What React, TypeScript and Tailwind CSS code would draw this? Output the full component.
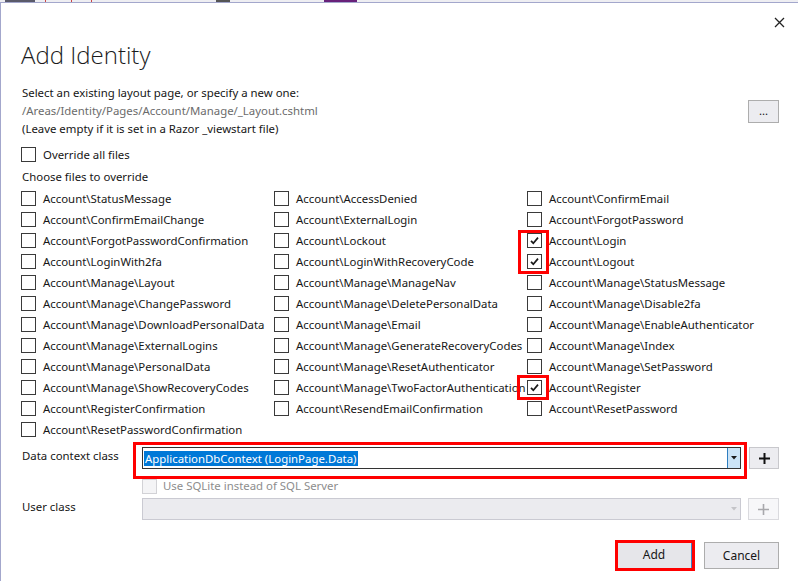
import React from "react";

const col1 = [
  "Account\\StatusMessage",
  "Account\\ConfirmEmailChange",
  "Account\\ForgotPasswordConfirmation",
  "Account\\LoginWith2fa",
  "Account\\Manage\\Layout",
  "Account\\Manage\\ChangePassword",
  "Account\\Manage\\DownloadPersonalData",
  "Account\\Manage\\ExternalLogins",
  "Account\\Manage\\PersonalData",
  "Account\\Manage\\ShowRecoveryCodes",
  "Account\\RegisterConfirmation",
  "Account\\ResetPasswordConfirmation",
];
const col2 = [
  "Account\\AccessDenied",
  "Account\\ExternalLogin",
  "Account\\Lockout",
  "Account\\LoginWithRecoveryCode",
  "Account\\Manage\\ManageNav",
  "Account\\Manage\\DeletePersonalData",
  "Account\\Manage\\Email",
  "Account\\Manage\\GenerateRecoveryCodes",
  "Account\\Manage\\ResetAuthenticator",
  "Account\\Manage\\TwoFactorAuthentication",
  "Account\\ResendEmailConfirmation",
];
const col3 = [
  "Account\\ConfirmEmail",
  "Account\\ForgotPassword",
  "Account\\Login",
  "Account\\Logout",
  "Account\\Manage\\StatusMessage",
  "Account\\Manage\\Disable2fa",
  "Account\\Manage\\EnableAuthenticator",
  "Account\\Manage\\Index",
  "Account\\Manage\\SetPassword",
  "Account\\Register",
  "Account\\ResetPassword",
];
const checked = new Set(["Account\\Login", "Account\\Logout", "Account\\Register"]);

function Box({ on, disabled }: { on?: boolean; disabled?: boolean }) {
  return (
    <div
      className={
        disabled
          ? "w-[15px] h-[15px] shrink-0 border border-[#d2d2d6] bg-[#f4f4f6]"
          : "w-[15px] h-[15px] shrink-0 border border-[#3a3a3a] bg-white flex items-center justify-center"
      }
    >
      {on && (
        <svg width="11" height="11" viewBox="0 0 11 11">
          <path d="M2 5.8 L4.3 8.2 L9 2.6" fill="none" stroke="#1a1a1a" strokeWidth="1.7" />
        </svg>
      )}
    </div>
  );
}

function Item({ label }: { label: string }) {
  return (
    <div className="h-[21px] flex items-center gap-[7px] whitespace-nowrap">
      <Box on={checked.has(label)} />
      <span>{label}</span>
    </div>
  );
}

export default function App() {
  return (
    <div
      className="relative w-[798px] h-[581px] overflow-hidden bg-white text-[#161616] text-[11.4px]"
      style={{ fontFamily: '"Noto Sans", "Open Sans", sans-serif' }}
    >
      {/* window behind */}
      <div className="h-[2px] flex bg-[#eeeef2]">
        <div className="w-[5px]" />
        <div className="w-[30px] bg-[#5a5a6a]" />
        <div className="w-[10px]" />
        <div className="w-[1px] bg-[#c44]" />
        <div className="w-[25px]" />
        <div className="w-[1px] bg-[#c44]" />
        <div className="w-[19px]" />
        <div className="w-[1px] bg-[#c44]" />
        <div className="w-[124px]" />
        <div className="w-[14px] bg-[#555]" />
        <div className="w-[94px]" />
        <div className="w-[33px] bg-[#68217a]" />
      </div>
      <div className="h-[1px] bg-[#a3a7cc]" />
      <div className="flex h-[578px]">
        <div className="w-[1px] bg-[#a3a7cc]" />
        <div className="flex-1 flex flex-col pl-[20px] pr-[19px]">
          {/* header */}
          <div className="h-[81px] flex justify-between items-start">
            <div
              className="mt-[36px] h-[32px] leading-[32px] text-[24px] font-light text-[#1b1b1b]"
              style={{ fontFamily: '"Open Sans", "Noto Sans", sans-serif' }}
            >
              Add Identity
            </div>
            <svg className="mt-[14px] -mr-[6px]" width="11" height="11" viewBox="0 0 11 11">
              <path d="M1 1 L10 10 M10 1 L1 10" stroke="#222" strokeWidth="1.3" />
            </svg>
          </div>

          {/* layout section */}
          <div className="flex justify-between">
            <div className="flex flex-col pl-[1px]">
              <div className="h-[18px] leading-[18px]">Select an existing layout page, or specify a new one:</div>
              <div className="h-[18px] leading-[18px] text-[#6b6b6b]">/Areas/Identity/Pages/Account/Manage/_Layout.cshtml</div>
              <div className="h-[18px] leading-[18px]">(Leave empty if it is set in a Razor _viewstart file)</div>
            </div>
            <div className="mt-[16px] w-[31px] h-[23px] border border-[#adadad] bg-[#ececf0] flex items-center justify-center leading-none pb-[2px]">
              ...
            </div>
          </div>

          <div className="mt-[6px] h-[21px] flex items-center gap-[7px]">
            <Box />
            <span>Override all files</span>
          </div>
          <div className="h-[23px] flex items-center pl-[1px]">Choose files to override</div>

          {/* file grid */}
          <div className="grid grid-cols-[253px_253px_1fr]">
            <div className="flex flex-col">
              {col1.map((l) => (
                <Item key={l} label={l} />
              ))}
            </div>
            <div className="flex flex-col">
              {col2.map((l) => (
                <Item key={l} label={l} />
              ))}
            </div>
            <div className="flex flex-col">
              {col3.map((l) => (
                <Item key={l} label={l} />
              ))}
            </div>
          </div>

          {/* data context */}
          <div className="mt-[7px] flex h-[22px]">
            <div className="w-[121px] pl-[1px] leading-[17px]">Data context class</div>
            <div className="flex-1 flex border border-[#333] bg-white">
              <div className="flex-1 flex items-center pl-[1px]">
                <span className="bg-[#0078d7] text-white px-[1px] leading-[15px]">ApplicationDbContext (LoginPage.Data)</span>
              </div>
              <div className="w-[13px] bg-[#cce4f7] border-l border-[#2f7ec0] flex items-center justify-center">
                <svg width="6" height="4" viewBox="0 0 6 4">
                  <path d="M0 0 L6 0 L3 3.5 Z" fill="#1a1a1a" />
                </svg>
              </div>
            </div>
            <div className="ml-[8px] w-[30px] border border-[#c8c8cc] bg-[#ececf0] flex items-center justify-center">
              <svg width="11" height="11" viewBox="0 0 11 11">
                <path d="M5.5 0 V11 M0 5.5 H11" stroke="#111" strokeWidth="2" />
              </svg>
            </div>
          </div>

          <div className="mt-[9px] h-[16px] flex items-center gap-[6px] pl-[121px] text-[#8d8d8d]">
            <Box disabled />
            <span>Use SQLite instead of SQL Server</span>
          </div>

          {/* user class */}
          <div className="mt-[4px] flex h-[22px]">
            <div className="w-[121px] pl-[1px] leading-[17px]">User class</div>
            <div className="flex-1 flex border border-[#cacad2] bg-[#ebebef]">
              <div className="flex-1" />
              <div className="w-[13px] flex items-center justify-center">
                <svg width="6" height="4" viewBox="0 0 6 4">
                  <path d="M0 0 L6 0 L3 3.5 Z" fill="#c4c4c8" />
                </svg>
              </div>
            </div>
            <div className="ml-[7px] w-[31px] border border-[#dadade] bg-[#f7f7f9] flex items-center justify-center">
              <svg width="11" height="11" viewBox="0 0 11 11">
                <path d="M5.5 0 V11 M0 5.5 H11" stroke="#a8a8ac" strokeWidth="1.6" />
              </svg>
            </div>
          </div>

          {/* buttons */}
          <div className="mt-[22px] flex justify-end gap-[12px] h-[26px] text-[12px]">
            <div className="w-[75px] h-[26px] bg-[#e6e6ea] border-r border-[#3b82c4] flex items-center justify-center">Add</div>
            <div className="w-[75px] h-[27px] bg-[#ececf0] border border-[#adadad] flex items-center justify-center">Cancel</div>
          </div>
        </div>
      </div>

      {/* red annotation boxes */}
      <div className="absolute left-[518px] top-[230px] w-[31px] h-[44px] border-[3px] border-[#ff0000]" />
      <div className="absolute left-[517px] top-[375px] w-[32px] h-[25px] border-[3px] border-[#ff0000]" />
      <div className="absolute left-[133px] top-[442px] w-[614px] h-[37px] border-[3px] border-[#ff0000]" />
      <div className="absolute left-[615px] top-[540px] w-[80px] h-[31px] border-[3px] border-[#ff0000]" />
    </div>
  );
}
